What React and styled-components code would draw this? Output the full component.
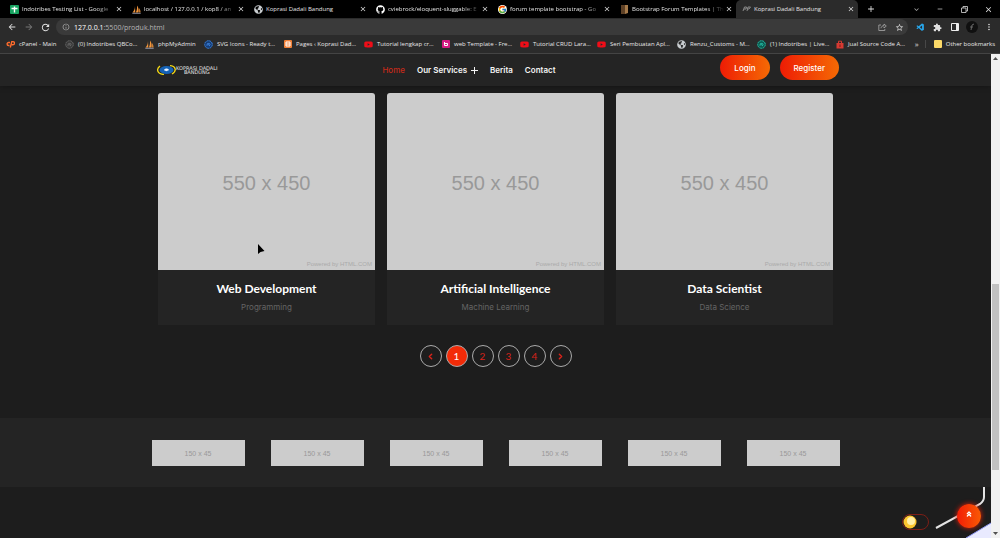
import React from "react";
import styled, { createGlobalStyle } from "styled-components";
import { FaGithub, FaYoutube, FaGlobeAmericas } from "react-icons/fa";
import { FcGoogle } from "react-icons/fc";
import { VscVscode } from "react-icons/vsc";
import {
  MdArrowBack, MdArrowForward, MdRefresh, MdInfoOutline, MdClose, MdAdd, MdStarBorder,
  MdExtension, MdMoreVert, MdKeyboardArrowDown, MdRemove,
} from "react-icons/md";
import { ChevronLeft, ChevronRight, ChevronsUp } from "lucide-react";

const Global = createGlobalStyle`
  * { box-sizing: border-box; }
  body { margin: 0; background: #1d1d1d; font-family: "Open Sans", sans-serif; }
  button, input { font: inherit; }
  ul { list-style: none; margin: 0; padding: 0; }
`;

const Window = styled.div`
  display: flex;
  flex-direction: column;
  height: 100vh;
  overflow: hidden;
`;

/* ---------- browser frame ---------- */
const TabStrip = styled.div`
  display: flex;
  align-items: stretch;
  flex: none;
  height: 18px;
  padding-left: 4px;
  background: #000;
  color: #e4e4e4;
`;
const Tab = styled.div`
  flex: 0 1 122px;
  min-width: 0;
  display: flex;
  align-items: center;
  padding: 0 3px 0 6px;
  font-size: 6px;
  border-radius: 5px 5px 0 0;
  background: ${(p) => (p.$active ? "#2b2b2b" : "transparent")};
  svg { flex: none; }
`;
const TabTitle = styled.span`
  flex: 1;
  padding-left: 3px;
  white-space: nowrap;
  mask-image: ${(p) => (p.$fade ? "linear-gradient(to right, #000 80%, transparent)" : "none")};
`;
const IconButton = styled.button`
  display: flex;
  align-items: center;
  justify-content: center;
  flex: none;
  width: ${(p) => p.$w || 17}px;
  padding: 0;
  border: 0;
  background: none;
  color: ${(p) => p.$color || "#e0e0e0"};
`;
const WindowControls = styled.div`
  display: flex;
  margin-left: auto;
`;
const Toolbar = styled.div`
  display: flex;
  align-items: center;
  flex: none;
  height: 18px;
  padding: 0 3px;
  background: #2b2b2b;
`;
const AddressBar = styled.div`
  flex: 1;
  display: flex;
  align-items: center;
  height: 16px;
  margin: 0 4px 0 2px;
  padding-left: 6px;
  border-radius: 8px;
  background: #3a3a3a;
  color: #b4b4b4;
  font-size: 7px;
`;
const Url = styled.span`
  flex: 1;
  padding-left: 4px;
  b { font-weight: 400; color: #fff; }
`;
const Bookmarks = styled.nav`
  display: flex;
  align-items: center;
  flex: none;
  height: 18px;
  padding: 0 5px 1px 6px;
  background: #2b2b2b;
  border-bottom: 1px solid #444;
`;
const Bookmark = styled.a`
  display: flex;
  align-items: center;
  flex: ${(p) => (p.$w ? `0 1 ${p.$w}px` : "none")};
  gap: 4px;
  white-space: nowrap;
  font-size: 6px;
  color: #e8e8e8;
  text-decoration: none;
  svg { flex: none; }
`;
const Overflow = styled.span`
  margin-left: auto;
  padding-right: 6px;
  margin-right: 8px;
  border-right: 1px solid #484848;
  color: #ddd;
  font-size: 8px;
  line-height: 8px;
`;

/* ---------- page ---------- */
const Viewport = styled.div`
  flex: 1;
  min-height: 0;
  display: flex;
`;
const Page = styled.div`
  flex: 1;
  min-width: 0;
  position: relative;
  overflow: hidden;
  font-family: Lato, sans-serif;
`;
const Header = styled.header`
  padding-left: 5px;
  background: #242424;
  box-shadow: 0 0 6px rgba(0, 0, 0, 0.4);
`;
const HeaderInner = styled.div`
  display: flex;
  justify-content: space-between;
  align-items: center;
  max-width: 682px;
  height: 32px;
  margin: 0 auto;
`;
const Logo = styled.a`
  display: flex;
  align-items: center;
  color: #e4e4e4;
  text-decoration: none;
  font: 5px/4px "DejaVu Sans", sans-serif;
  text-align: center;
`;
const Menu = styled.ul`
  display: flex;
  gap: 12px;
`;
const MenuLink = styled.a`
  display: flex;
  align-items: center;
  gap: 4px;
  color: ${(p) => (p.$active ? "#c52a1a" : "#f4f4f4")};
  font: ${(p) => (p.$active ? 500 : 600)} 8px/12px Inter, sans-serif;
  text-decoration: none;
`;
const Actions = styled.div`
  display: flex;
  gap: 10px;
  align-self: flex-start;
  padding-top: 1px;
`;
const PillButton = styled.button`
  height: 25px;
  padding: 0 14px;
  border: 0;
  border-radius: 13px;
  background: linear-gradient(90deg, #ee1c05, #f56a04);
  color: #fff;
  font: 500 8px/12px Inter, sans-serif;
`;
const Cards = styled.div`
  display: grid;
  grid-template-columns: repeat(3, 1fr);
  gap: 12px;
  max-width: 675px;
  margin: 7px auto 0;
`;
const Card = styled.article`
  background: #242424;
  text-align: center;
  border-radius: 3px 3px 0 0;
  overflow: hidden;
`;
const CardImage = styled.div`
  display: flex;
  flex-direction: column;
  height: 177px;
  padding: 0 3px 2px;
  background: #ccc;
  color: #999;
`;
const SizeLabel = styled.span`
  flex: 1;
  display: flex;
  align-items: center;
  justify-content: center;
  padding-top: 12px;
  font: 20px/24px "Liberation Sans", sans-serif;
`;
const Credit = styled.small`
  align-self: flex-end;
  color: #aaa;
  font: 6px/7px "Liberation Sans", sans-serif;
`;
const CardTitle = styled.h3`
  margin: 11px 0 0;
  color: #fff;
  font: 700 12px/16px Lato, sans-serif;
`;
const CardSubtitle = styled.p`
  margin: 4px 0 0;
  padding-bottom: 12px;
  color: #646464;
  font: 8px/12px Inter, sans-serif;
`;
const Pagination = styled.nav`
  display: flex;
  justify-content: center;
  gap: 4px;
  margin-top: 20px;
`;
const PageButton = styled.button`
  display: flex;
  align-items: center;
  justify-content: center;
  width: 22px;
  height: 22px;
  padding: 0;
  border: 1px solid #aaa;
  border-radius: 50%;
  background: ${(p) => (p.$active ? "#f22b08" : "transparent")};
  color: ${(p) => (p.$active ? "#fff" : "#d8231a")};
  font: 10px/12px Lato, sans-serif;
`;
const Brands = styled.section`
  margin-top: 51px;
  padding: 22px 0 21px;
  background: #242424;
`;
const BrandRow = styled.div`
  display: grid;
  grid-template-columns: repeat(6, 1fr);
  gap: 26px;
  max-width: 688px;
  margin: 0 auto;
`;
const Brand = styled.div`
  padding: 8px 0 6px;
  background: #ccc;
  color: #999;
  text-align: center;
  font: 7px/12px "Liberation Sans", sans-serif;
`;
const Cursor = styled.svg`
  position: absolute;
  left: 257px;
  top: 190px;
`;
const Corner = styled.svg`
  position: absolute;
  right: 0;
  bottom: 0;
`;
const ScrollTop = styled.button`
  position: absolute;
  right: 10px;
  bottom: 10px;
  display: flex;
  justify-content: center;
  width: 24px;
  height: 24px;
  padding: 6px 0 0;
  border: 0;
  border-radius: 50%;
  background: linear-gradient(90deg, #f21d06, #f95a04);
  box-shadow: 0 0 5px #e81e08;
  color: #fff;
`;
const ThemeToggle = styled.label`
  position: absolute;
  right: 62px;
  bottom: 8px;
  width: 27px;
  height: 16px;
  border: 1px solid #7c1d16;
  border-radius: 9px;
  input { position: absolute; opacity: 0; margin: 0; }
  svg { position: absolute; left: 0; top: 0; }
`;
const Scrollbar = styled.div`
  display: flex;
  flex-direction: column;
  align-items: center;
  flex: none;
  width: 9px;
  padding: 3px 0;
  background: #f1f1f1;
`;
const Thumb = styled.div`
  width: 7px;
  flex: 39 0 0;
  background: #c1c1c1;
`;
const Spacer = styled.div`
  flex: ${(p) => p.$grow} 0 0;
`;

const Sheets = () => (
  <svg width="9" height="9" viewBox="0 0 9 9"><rect width="9" height="9" rx="1" fill="#18a461" /><path d="M1.500 3.500h6M4.500 1.500v6" stroke="#fff" strokeWidth="1.400" /></svg>
);
const Sail = () => (
  <svg width="9" height="9" viewBox="0 0 9 9">
    <path d="M3 1C3 4 2 6 .5 7.500h2.800zM5 .5c1.500 2 2 4.500 1.500 7H3.800C5 5 5.200 3 5 .5zM7.200 3c1 1.500 1.300 3 1.300 4.500H7.200z" fill="#f3953a" />
    <path d="M.3 8.300h8.400" stroke="#a9adc4" strokeWidth=".8" />
  </svg>
);
const CPanel = () => (
  <svg width="9" height="8" viewBox="0 0 9 8">
    <path d="M4 2.500H2.600a1.500 1.500 0 0 0 0 3H3.500M4.300 7.500 5.800 1.600h1.100a1.500 1.500 0 0 1 0 3.200H5.800" fill="none" stroke="#ff6c2c" strokeWidth="1.400" />
  </svg>
);
const Globe = () => <FaGlobeAmericas size={9} color="#c9cdd0" />;
const Tube = () => <FaYoutube size={9} color="#f00d18" />;
const Box = ({ fill, mark }) => (
  <svg width="8" height="8" viewBox="0 0 8 8"><rect width="8" height="8" rx="1" fill={fill} /><path d={mark} fill="none" stroke="#fff" /></svg>
);
const Bag = () => (
  <svg width="8" height="9" viewBox="0 0 8 9"><path d="M.5 3h7v5.500h-7z" fill="#d63a32" /><path d="M2.500 3V1.200h3V3" fill="none" stroke="#d63a32" /><path d="M4 4.500v2.500" stroke="#7c1b17" /></svg>
);
const Book = () => (
  <svg width="9" height="9" viewBox="0 0 9 9"><path d="M1 0h4v9H1z" fill="#5e4126" /><path d="M5 0h3v8L5 9z" fill="#a67b4b" /></svg>
);
const Bird = () => (
  <svg width="9" height="6" viewBox="0 0 9 6"><path d="M1 5 2.500 1h2L4 3H2M5 5l1-4h2.500L7 3H5" fill="none" stroke="#8a8a8a" /></svg>
);
const Round = ({ fill, stroke }) => (
  <svg width="9" height="9" viewBox="0 0 9 9"><circle cx="4.500" cy="4.500" r="3.800" fill={fill} stroke={stroke} strokeDasharray="2 .6" /><path d="M3 5.800C2.500 3 6.500 2.500 6 5M3 3.500l3 2.500" fill="none" stroke={stroke} /></svg>
);

const tabs = [
  ["Indotribes Testing List - Google", <Sheets />, true],
  ["localhost / 127.0.0.1 / kop8 / an", <Sail />, true],
  ["Koprasi Dadali Bandung", <Globe />],
  ["cviebrock/eloquent-sluggable: E", <FaGithub size={9} color="#fff" />, true],
  ["forum template bootstrap - Go", <FcGoogle size={9} style={{ background: "#fff", borderRadius: 5 }} />, true],
  ["Bootstrap Forum Templates | Th", <Book />, true],
  ["Koprasi Dadali Bandung", <Bird />],
];

const bookmarks = [
  ["cPanel - Main", 59, <CPanel />],
  ["(0) Indotribes QBCo...", 80, <Round fill="#3a3a3a" stroke="#666" />],
  ["phpMyAdmin", 59, <Sail />],
  ["SVG Icons - Ready t...", 80, <Round fill="#153d78" stroke="#3c83dc" />],
  ["Pages ‹ Koprasi Dad...", 80, <Box fill="#f08038" mark="M2 2h4v4H2zM2 4h4" />],
  ["Tutorial lengkap cr...", 78, <Tube />],
  ["web Template - Fre...", 78, <Box fill="#d51b83" mark="M2.500 2v3.500h3V3.500H3" />],
  ["Tutorial CRUD Lara...", 77, <Tube />],
  ["Seri Pembuatan Apl...", 80, <Tube />],
  ["Renzu_Customs - M...", 80, <Globe />],
  ["(1) Indotribes | Live...", 79, <Round fill="#0c5a50" stroke="#25bda5" />],
  ["Jual Source Code A...", 78, <Bag />],
];

const products = [
  ["Web Development", "Programming"],
  ["Artificial Intelligence", "Machine Learning"],
  ["Data Scientist", "Data Science"],
];

export default function App() {
  return (
    <Window>
      <Global />
      <TabStrip>
        {tabs.map(([title, icon, fade], i) => (
          <Tab key={i} $active={i === 6}>
            {icon}
            <TabTitle $fade={fade}>{title}</TabTitle>
            <IconButton $w={8} aria-label="Close tab"><MdClose size={8} /></IconButton>
          </Tab>
        ))}
        <IconButton $w={26} aria-label="New tab"><MdAdd size={10} /></IconButton>
        <WindowControls>
          <IconButton $w={24} aria-label="Search tabs" $color="#aaa"><MdKeyboardArrowDown size={9} /></IconButton>
          <IconButton $w={24} aria-label="Minimize"><MdRemove size={8} /></IconButton>
          <IconButton $w={24} aria-label="Restore">
            <svg width="7" height="7" viewBox="0 0 7 7"><path d="M.5 2h4.500v4.500H.5zM2 2V.5h4.500V5H5" fill="none" stroke="#ddd" strokeWidth=".8" /></svg>
          </IconButton>
          <IconButton $w={24} aria-label="Close"><MdClose size={9} /></IconButton>
        </WindowControls>
      </TabStrip>
      <Toolbar>
        <IconButton aria-label="Back"><MdArrowBack size={10} /></IconButton>
        <IconButton aria-label="Forward" $color="#777"><MdArrowForward size={10} /></IconButton>
        <IconButton aria-label="Reload"><MdRefresh size={11} /></IconButton>
        <AddressBar>
          <MdInfoOutline size={8} />
          <Url><b>127.0.0.1</b>:5500/produk.html</Url>
          <IconButton aria-label="Share">
            <svg width="9" height="8" viewBox="0 0 9 8"><path d="M3 2H.8v5.500h6V6M3 5.200C3.200 3.500 4.500 2.600 6 2.600V1l2.300 2L6 5V3.600" fill="none" stroke="#aaa" strokeWidth=".8" /></svg>
          </IconButton>
          <IconButton aria-label="Bookmark"><MdStarBorder size={9} /></IconButton>
        </AddressBar>
        <IconButton aria-label="Editor"><VscVscode size={9} color="#27a5ea" /></IconButton>
        <IconButton aria-label="Extensions"><MdExtension size={9} /></IconButton>
        <IconButton aria-label="Side panel">
          <svg width="8" height="8" viewBox="0 0 8 8"><path d="M.5.5h7v7h-7z" fill="none" stroke="#eee" /><path d="M5 1h2v6H5z" fill="#eee" /></svg>
        </IconButton>
        <IconButton aria-label="Profile">
          <svg width="12" height="12" viewBox="0 0 12 12"><circle cx="6" cy="6" r="6" fill="#101010" /><path d="M5 9 6 4l2-1M4 6h3" fill="none" stroke="#666" /></svg>
        </IconButton>
        <IconButton aria-label="Menu"><MdMoreVert size={10} /></IconButton>
      </Toolbar>
      <Bookmarks>
        {bookmarks.map(([label, w, icon]) => (
          <Bookmark key={label} href="#" $w={w}>{icon}{label}</Bookmark>
        ))}
        <Overflow>»</Overflow>
        <Bookmark href="#"><Box fill="#fbd968" mark="" />Other bookmarks</Bookmark>
      </Bookmarks>

      <Viewport>
        <Page>
          <Header>
            <HeaderInner>
              <Logo href="#">
                <svg width="19" height="10" viewBox="0 0 19 10">
                  <path d="M3 1C-1 4 0 9 7 9.500" fill="none" stroke="#f4d916" strokeWidth="1.300" />
                  <path d="M13 .6C19 1 20 6 15 9" fill="none" stroke="#f4d916" strokeWidth="1.300" />
                  <ellipse cx="9.500" cy="5" rx="7" ry="4" fill="#1561b4" />
                  <path d="M7 5c1-2 4-2 5 0-2 1-3 2-5 0z" fill="#e9f3ff" />
                </svg>
                <span>KOPRASI DADALI<br />BANDUNG</span>
              </Logo>
              <Menu>
                <li><MenuLink href="#" $active>Home</MenuLink></li>
                <li>
                  <MenuLink href="#">Our Services
                    <svg width="7" height="7" viewBox="0 0 7 7"><path d="M0 3.500h7M3.500 0v7" stroke="#f4f4f4" /></svg>
                  </MenuLink>
                </li>
                <li><MenuLink href="#">Berita</MenuLink></li>
                <li><MenuLink href="#">Contact</MenuLink></li>
              </Menu>
              <Actions>
                <PillButton>Login</PillButton>
                <PillButton>Register</PillButton>
              </Actions>
            </HeaderInner>
          </Header>
          <Cards>
            {products.map(([title, subtitle]) => (
              <Card key={title}>
                <CardImage>
                  <SizeLabel>550 x 450</SizeLabel>
                  <Credit>Powered by HTML.COM</Credit>
                </CardImage>
                <CardTitle>{title}</CardTitle>
                <CardSubtitle>{subtitle}</CardSubtitle>
              </Card>
            ))}
          </Cards>
          <Pagination>
            <PageButton aria-label="Previous"><ChevronLeft size={9} strokeWidth={4} /></PageButton>
            {[1, 2, 3, 4].map((n) => <PageButton key={n} $active={n === 1}>{n}</PageButton>)}
            <PageButton aria-label="Next"><ChevronRight size={9} strokeWidth={4} /></PageButton>
          </Pagination>
          <Brands>
            <BrandRow>
              {[1, 2, 3, 4, 5, 6].map((n) => <Brand key={n}>150 x 45</Brand>)}
            </BrandRow>
          </Brands>
          <Cursor width="8" height="11" viewBox="0 0 8 11"><path d="M1 0v10l2.500-2 4-1z" fill="#000" /></Cursor>
          <Corner width="60" height="52" viewBox="0 0 60 52">
            <path d="M35 52 60 37v15z" fill="#e9eaff" />
            <path d="M35 52 60 37" stroke="#8b94ee" />
            <path d="M5 42 49 18Q53 15 53 11V1" fill="none" stroke="#e4e4e4" strokeWidth="2" />
          </Corner>
          <ScrollTop aria-label="Back to top"><ChevronsUp size={8} strokeWidth={4} /></ScrollTop>
          <ThemeToggle aria-label="Dark mode">
            <input type="checkbox" />
            <svg width="14" height="14" viewBox="0 0 14 14"><circle cx="7" cy="7" r="6.500" fill="#fcc62f" /><circle cx="8" cy="6" r="4" fill="#fff0a8" /></svg>
          </ThemeToggle>
        </Page>
        <Scrollbar>
          <svg width="5" height="3" viewBox="0 0 5 3"><path d="M0 3 2.500 0 5 3z" fill="#505050" /></svg>
          <Spacer $grow={47} />
          <Thumb />
          <Spacer $grow={13} />
          <svg width="5" height="3" viewBox="0 0 5 3"><path d="M0 0h5L2.500 3z" fill="#505050" /></svg>
        </Scrollbar>
      </Viewport>
    </Window>
  );
}
